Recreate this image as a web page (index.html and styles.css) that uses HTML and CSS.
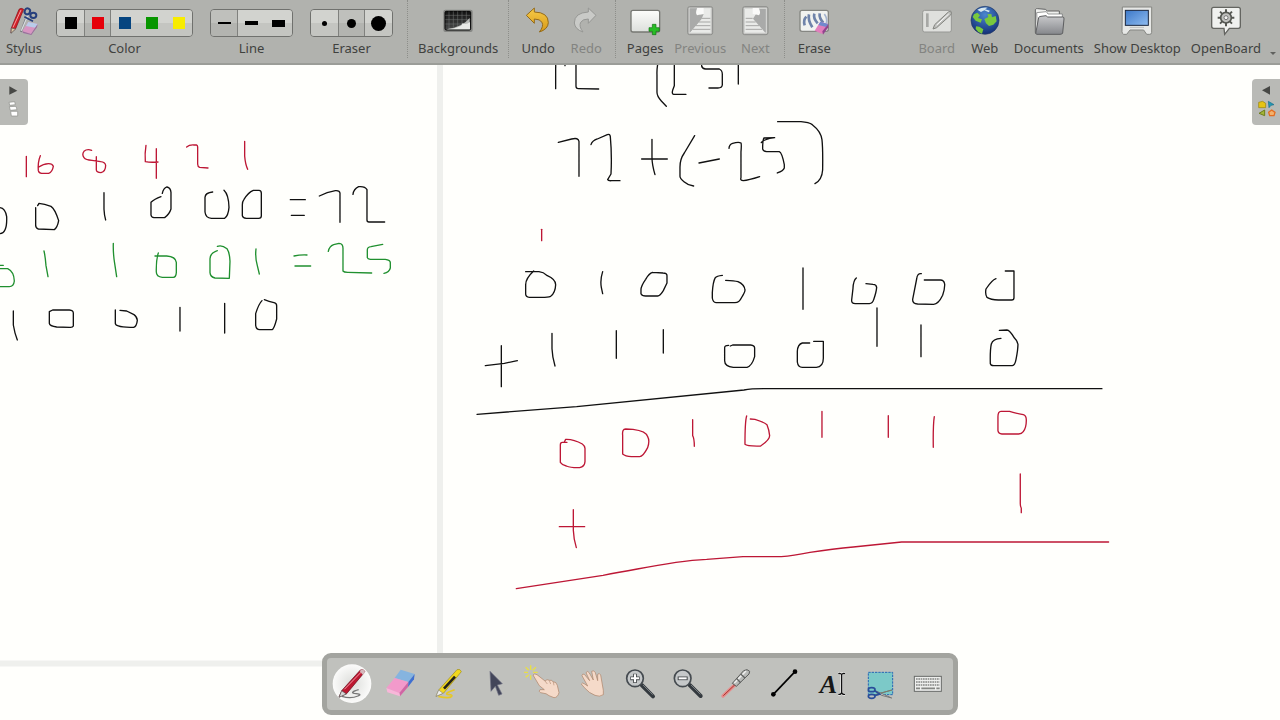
FILE: index.html
```html
<!DOCTYPE html>
<html lang="en">
<head>
<meta charset="utf-8">
<title>OpenBoard</title>
<link rel="stylesheet" href="styles.css">
</head>
<body>
<svg class="defs" aria-hidden="true">
  <defs>
    <linearGradient id="gold" x1="0" y1="0" x2="0" y2="1"><stop offset="0" stop-color="#f6ca48"/><stop offset="1" stop-color="#d89a18"/></linearGradient>
    <linearGradient id="paper" x1="0" y1="0" x2="0" y2="1"><stop offset="0" stop-color="#fdfdfb"/><stop offset="1" stop-color="#dcdfdb"/></linearGradient>
    <linearGradient id="screen" x1="0" y1="0" x2="1" y2="1"><stop offset="0" stop-color="#3c78c8"/><stop offset="1" stop-color="#8fbcf0"/></linearGradient>
    <linearGradient id="folder" x1="0" y1="0" x2="0" y2="1"><stop offset="0" stop-color="#c9cacc"/><stop offset="1" stop-color="#85878b"/></linearGradient>
    <linearGradient id="slate" x1="0" y1="0" x2="0" y2="1"><stop offset="0" stop-color="#111"/><stop offset="1" stop-color="#4a4b4b"/></linearGradient>
    <radialGradient id="sea" cx=".5" cy=".3" r=".7"><stop offset="0" stop-color="#4b86cf"/><stop offset="1" stop-color="#132f76"/></radialGradient>
    <radialGradient id="disc"><stop offset="0" stop-color="#dcddda"/><stop offset="1" stop-color="#fbfbfa"/></radialGradient>
  </defs>
</svg>

<header class="toolbar">
  <button class="tool" type="button">
    <svg class="icon" viewBox="23 15 96 96"><path d="M62 96L76 58" stroke="#777b80" stroke-width="6"/><path d="M63 92L86 38" stroke="#d9dcdf" stroke-width="4"/><path d="M72 50L98 64" stroke="#263f7d" stroke-width="5"/><ellipse cx="81" cy="34" rx="8" ry="9" stroke="#263f7d" stroke-width="6" transform="rotate(25 81 34)"/><ellipse cx="99" cy="46" rx="9" ry="8" stroke="#263f7d" stroke-width="6"/><path d="M34 96L32 99L33 84L56 28Q62 22 70 28L46 86Z" fill="#d51f27" stroke="#7d1118" stroke-width="2"/><path d="M38 82L62 30" stroke="#f3a0a2" stroke-width="3"/><path d="M33 84L46 87L32 100Z" fill="#d8c7a5" stroke="#555" stroke-width="2"/><path d="M84 66L112 72L92 102L66 94Z" fill="#d895c2"/><path d="M84 66L112 72L105 83L77 78Z" fill="#b9cdea"/><path d="M66 94L92 102L112 72L110 82L93 105L68 99Z" fill="#9c6e9e"/></svg>
    <span class="label">Stylus</span>
  </button>
  <div class="tool tool-set" role="group" aria-labelledby="color-label">
    <div class="segments">
      <button class="segment" type="button" aria-label="Black"><i class="swatch black"></i></button>
      <button class="segment" type="button" aria-label="Red" aria-pressed="true"><i class="swatch red"></i></button>
      <button class="segment" type="button" aria-label="Blue"><i class="swatch blue"></i></button>
      <button class="segment" type="button" aria-label="Green"><i class="swatch green"></i></button>
      <button class="segment" type="button" aria-label="Yellow"><i class="swatch yellow"></i></button>
    </div>
    <span class="label" id="color-label">Color</span>
  </div>
  <div class="tool tool-set" role="group" aria-labelledby="line-label">
    <div class="segments">
      <button class="segment" type="button" aria-label="Fine line" aria-pressed="true"><i class="line fine"></i></button>
      <button class="segment" type="button" aria-label="Medium line"><i class="line medium"></i></button>
      <button class="segment" type="button" aria-label="Strong line"><i class="line strong"></i></button>
    </div>
    <span class="label" id="line-label">Line</span>
  </div>
  <div class="tool tool-set" role="group" aria-labelledby="eraser-label">
    <div class="segments">
      <button class="segment" type="button" aria-label="Small eraser"><i class="dot small"></i></button>
      <button class="segment" type="button" aria-label="Medium eraser" aria-pressed="true"><i class="dot middle"></i></button>
      <button class="segment" type="button" aria-label="Large eraser"><i class="dot large"></i></button>
    </div>
    <span class="label" id="eraser-label">Eraser</span>
  </div>
  <span class="divider"></span>
  <button class="tool" type="button">
    <svg class="icon" viewBox="129 15 96 96"><rect x="133" y="29" width="88" height="67" rx="6" fill="#858683"/><rect x="138" y="34" width="77" height="56" rx="4" fill="url(#slate)" stroke="#050505" stroke-width="3"/><path d="M150 34V88M163 34V84M176 34V80M189 34V75M202 34V68M139 46H214M139 59H214M139 72H190" stroke="#777a79" stroke-width="1.5"/><path d="M142 88Q190 82 212 54V88Z" fill="#b9bbb9"/><path d="M142 88Q190 84 190 70Q202 75 213 66V88Z" fill="#e8e9e7"/></svg>
    <span class="label">Backgrounds</span>
  </button>
  <span class="divider"></span>
  <button class="tool" type="button">
    <svg class="icon" viewBox="368 15 96 96"><path d="M381 46L405 24V36Q447 37 447 68Q446 88 420 96Q434 79 428 67Q422 57 405 57V70Z" fill="url(#gold)" stroke="#926a1c" stroke-width="3" stroke-linejoin="round"/></svg>
    <span class="label">Undo</span>
  </button>
  <button class="tool" type="button" disabled>
    <svg class="icon" viewBox="512 15 96 96"><path d="M590 46L567 24V36Q525 38 525 69Q527 88 551 96Q538 79 544 67Q550 57 567 57V70Z" fill="#c9cac7" stroke="#969794" stroke-width="3" stroke-linejoin="round"/></svg>
    <span class="label">Redo</span>
  </button>
  <span class="divider"></span>
  <button class="tool" type="button">
    <svg class="icon" viewBox="688 15 96 96"><rect x="694" y="31" width="86" height="65" rx="6" fill="url(#paper)" stroke="#777873" stroke-width="4"/><path d="M758 73H769V83H779V94H769V104H758V94H748V83H758Z" fill="#27bd25" stroke="#116f12" stroke-width="2"/></svg>
    <span class="label">Pages</span>
  </button>
  <button class="tool" type="button" disabled>
    <svg class="icon" viewBox="855 15 96 96"><rect x="866" y="20" width="75" height="84" rx="6" fill="#b2b3b0" stroke="#8e8f8c" stroke-width="3"/><rect x="871" y="25" width="65" height="74" fill="#b5b6b4" stroke="#d9dad8" stroke-width="3"/><path d="M893 25H935V98H872L908 56Z" fill="#e9eae8"/><path d="M908 56L872 98V25H894Q888 38 895 46Q901 43 914 42Z" fill="#a9aaa9"/><path d="M895 24Q888 38 894 46Q902 43 914 42V24Z" fill="#fafaf9"/><path d="M909 55H934M899 66H934M890 77H934M881 88H934" stroke="#a6a7a5" stroke-width="3"/></svg>
    <span class="label">Previous</span>
  </button>
  <button class="tool" type="button" disabled>
    <svg class="icon" viewBox="1020 15 96 96"><rect x="1031" y="20" width="76" height="84" rx="6" fill="#b2b3b0" stroke="#8e8f8c" stroke-width="3"/><rect x="1036" y="25" width="66" height="74" fill="#a9aaa9" stroke="#d9dad8" stroke-width="3"/><path d="M1038 26H1081L1062 56L1099 98H1038Z" fill="#e9eae8"/><path d="M1061 24H1079Q1087 38 1080 46Q1072 43 1061 42Z" fill="#fafaf9"/><path d="M1040 55H1061M1040 66H1070M1040 77H1080M1040 88H1089" stroke="#a6a7a5" stroke-width="3"/></svg>
    <span class="label">Next</span>
  </button>
  <span class="divider"></span>
  <button class="tool" type="button">
    <svg class="icon" viewBox="1197 15 96 96"><rect x="1203" y="31" width="85" height="63" rx="6" fill="#f1f2f0" stroke="#858682" stroke-width="4"/><path d="M1217 76Q1212 60 1222 50M1240 82Q1226 60 1230 43M1256 70Q1242 55 1246 41M1273 68Q1260 54 1262 40" stroke="#6f83aa" stroke-width="8"/><path d="M1276 42Q1286 56 1282 70" stroke="#a5b4cf" stroke-width="5"/><path d="M1264 65L1288 72L1270 102L1247 92Z" fill="#e27fbd"/><path d="M1264 65L1288 72L1282 81L1258 75Z" fill="#7189ce"/><path d="M1288 72V82L1272 104L1270 94Z" fill="#92448e"/></svg>
    <span class="label">Erase</span>
  </button>
  <nav class="modes" aria-label="Modes">
    <button class="tool" type="button" disabled>
      <svg class="icon" viewBox="207 15 96 96"><rect x="212" y="31" width="86" height="65" rx="6" fill="#dfe0dd" stroke="#969794" stroke-width="3"/><path d="M226 40V81" stroke="#a7a8a5" stroke-width="8"/><path d="M243 87L248 74L289 36Q294 32 298 37Q299 41 295 46L254 83Z" fill="#c0c1be" stroke="#83847f" stroke-width="3"/><path d="M254 75L290 42" stroke="#fff" stroke-width="3"/></svg>
      <span class="label">Board</span>
    </button>
    <button class="tool" type="button">
      <svg class="icon" viewBox="351 15 96 96"><circle cx="399" cy="61" r="42" fill="url(#sea)" stroke="#263d67" stroke-width="2"/><path d="M366 43L376 38L384 46L378 54L390 58L386 68L371 62L362 51ZM397 57L409 51L406 43L418 42L420 52L431 48L434 64L424 74L411 78L402 70ZM372 79L382 80L394 88L390 101Q376 96 371 87Z" fill="#79c83d"/><path d="M376 29Q390 21 407 23L399 28L414 32L410 37L397 31L387 36Z" fill="#d4e6ef"/></svg>
      <span class="label">Web</span>
    </button>
    <button class="tool" type="button">
      <svg class="icon" viewBox="543 15 96 96"><path d="M550 98V29Q552 25 557 26L580 28L586 33H622V95Z" fill="#eeefed" stroke="#626363" stroke-width="3"/><path d="M554 38L583 35L588 42H631V90H557Z" fill="#fff" stroke="#686969" stroke-width="2"/><path d="M551 101L560 53Q561 49 567 49L582 47L587 51H632Q637 51 636 57L632 99Q631 103 624 103H555Z" fill="url(#folder)" stroke="#5d5e60" stroke-width="3"/></svg>
      <span class="label">Documents</span>
    </button>
    <button class="tool" type="button">
      <svg class="icon" viewBox="812 15 96 96"><path d="M816 21H904V97Q904 103 898 103H889L880 90H839L829 103H820Q815 101 815 95Z" fill="#e7e8e6" stroke="#858682" stroke-width="3"/><rect x="825" y="31" width="69" height="45" fill="url(#screen)" stroke="#18243d" stroke-width="3"/><path d="M838 82H881" stroke="#bfc0bd" stroke-width="3"/></svg>
      <span class="label">Show Desktop</span>
    </button>
    <button class="tool" type="button">
      <svg class="icon" viewBox="1082 15 96 96"><path d="M1093 22H1167Q1173 22 1173 28V79Q1173 85 1167 85H1140L1126 103L1124 85H1093Q1087 85 1087 79V28Q1087 22 1093 22Z" fill="#f0f1ef" stroke="#646561" stroke-width="4"/><path d="M1130 28V79M1105 53H1155M1112 35L1148 71M1112 71L1148 35" stroke="#555752" stroke-width="6"/><circle cx="1130" cy="53" r="16" fill="#c0c1be" stroke="#555752" stroke-width="5"/><circle cx="1130" cy="53" r="6" fill="#f3f3f2" stroke="#777" stroke-width="3"/></svg>
      <span class="label">OpenBoard</span>
    </button>
    <button class="more" type="button" aria-label="More tools"><i></i></button>
  </nav>
</header>

<main class="board">
  <svg class="canvas" viewBox="0 65 1280 655" preserveAspectRatio="xMinYMin slice" role="img" aria-label="Binary working for 72 + (-25)">
    <path class="page-edge" d="M440 60V664M443 663.500H0"/>
    <g class="ink" transform="translate(0 130) scale(.3333)">
      <path class="red" d="M79 79V140M121 77Q113 96 115 122Q117 130 125 130H146Q157 126 160 109Q157 101 146 101Q130 101 115 112M275 61Q261 56 252 64Q245 73 252 83Q257 90 276 91L302 95Q315 96 317 106Q317 125 303 128Q289 127 289 119V80M438 46Q434 70 436 95Q452 98 474 96M469 56V145M560 51Q568 44 582 45H590Q594 47 593 57V102Q593 110 599 112L624 114"/>
      <path d="M0 233Q16 235 20 260Q22 310 0 311M107 233V286Q107 295 115 297L163 299Q172 293 176 272Q165 237 153 229Q133 222 117 220L113 227M312 188V238Q313 258 317 270M483 200Q463 207 453 217V255Q454 262 462 263H494Q508 253 513 237V187Q512 174 501 171Q490 175 487 190M40 543V585Q44 610 52 630M158 540H208Q221 541 220 551V588Q218 593 209 592L170 591Q149 588 148 580V545ZM346 540V579Q345 585 355 588Q368 593 401 592Q410 589 412 571Q411 560 402 554L380 543L360 541M540 532V603"/>
      <path class="green" d="M0 406H10M0 416H23Q42 425 43 453Q41 470 28 470H0M132 363Q136 380 138 407L144 440M340 340Q339 370 344 400L350 440M465 378H500Q527 380 529 397V428Q528 442 520 442H487Q469 440 469 426Q468 391 475 369"/>
    </g>
    <g class="ink" transform="translate(190 130) scale(.3333)">
      <path class="red" d="M164 34V78Q166 103 173 118"/>
      <path d="M68 186Q46 188 45 202V246Q47 264 64 265H104Q115 257 117 232Q116 194 102 181M157 224Q157 215 162 208Q175 187 190 181H207Q214 181 214 190V258Q214 265 206 265H169Q158 264 157 257ZM301 209H346M304 256H343M388 198Q411 186 436 182Q449 181 450 189V277M489 193Q491 177 506 170Q525 168 531 179V270Q531 276 537 276H584M104 520V609M216 512Q206 522 197 551V586Q199 599 209 599H246Q252 598 260 567V527Q260 520 252 518Q237 515 223 509"/>
      <path class="green" d="M82 362Q60 370 60 386V428Q61 441 75 444L118 445L120 394Q119 368 111 356Q96 344 82 349M198 357Q195 382 202 407L208 432M312 378Q331 374 351 375M315 408H362M415 364Q418 349 431 344L447 340Q460 340 459 358V423Q462 427 473 427L545 429M578 343L543 350Q532 351 532 360V383Q533 387 541 388H586Q602 390 601 399V414Q598 427 582 430"/>
    </g>
    <g class="ink" transform="translate(460 60) scale(.3333)">
      <path d="M284 0Q288 8 287 26V86M315 0V17M348 0V79Q348 86 355 86L416 87M596 0Q590 22 591 45V97Q591 109 604 123L619 139M643 0V77L638 91Q635 102 641 103H678M725 0V18Q727 26 737 27H778Q788 31 787 46V75Q786 84 774 84H747M835 0V72"/>
      <path d="M295 247L335 237Q355 232 357 244V349M393 254Q397 242 412 237L442 224Q450 221 451 230Q456 284 453 342L443 359Q445 363 455 362H480M545 297H622M576 238V292Q576 314 585 344M704 227L673 279Q660 297 660 321V348Q659 355 672 365Q683 375 701 378M717 309L778 297M807 265Q808 253 818 250Q836 245 843 249Q845 252 843 276V353Q840 362 850 362Q865 361 899 350M904 248Q909 238 944 233L912 234Q908 240 908 267Q909 273 920 275H958Q966 278 973 314V324Q970 333 952 339M953 185H1023Q1047 187 1057 194Q1083 214 1086 239Q1089 265 1088 330Q1086 360 1065 371"/>
      <path class="red" d="M245 508V542"/>
    </g>
    <g class="ink" transform="translate(465 250) scale(.3333)">
      <path d="M182 65H222Q235 66 247 77Q272 88 272 104Q271 128 257 139Q249 142 230 142H193Q182 141 182 132V104Q182 85 206 63M413 65Q405 90 409 112L413 131M563 67Q552 70 542 88Q528 108 528 119V131Q531 138 542 138H577Q585 139 595 122L606 99V79Q607 69 594 69L563 67M772 76Q755 78 751 83Q744 95 742 128V144Q744 157 753 158H810Q823 158 829 144Q841 125 840 120Q838 103 819 95Q809 92 782 91M261 250V296Q262 321 270 348M454 242V325M595 239V309M109 287V410M61 347L118 340L157 332M796 288L803 285H857Q869 287 869 294V320Q861 348 846 352H805Q779 349 779 332V295Q778 286 791 286"/>
      <path d="M36 493L335 470L837 420Q858 416 900 416H1911"/>
    </g>
    <g class="ink" transform="translate(780 250) scale(.3333)">
      <path d="M69 54V178M229 84Q220 91 219 115L215 150Q214 161 226 161H268Q278 160 281 149Q289 126 290 112Q289 103 279 103L258 101M424 71Q412 69 410 87L398 148Q397 161 413 162L461 163Q475 163 488 136Q495 115 494 102Q492 90 481 90H433M648 86Q636 90 618 117Q615 133 621 142Q632 149 655 150H695Q702 150 702 143V63H676M291 174V289M423 225V320M89 279H67Q53 283 52 304V336Q54 352 67 352H109Q130 351 130 325V274H101M663 265Q639 266 634 282Q630 300 631 341Q632 347 641 347H697Q705 346 708 329Q714 299 714 283Q712 272 704 265Q689 240 681 240L658 241"/>
    </g>
    <g class="ink red" transform="translate(500 400) scale(.3333)">
      <path d="M201 127H187Q181 127 181 135V187Q187 196 199 198Q213 204 239 203Q254 200 255 185V145Q254 137 247 132Q221 117 197 118L193 126M368 162V106Q366 87 377 87L399 88Q439 93 443 110Q450 122 443 143Q429 170 419 170H394Q376 169 368 162M578 59V107Q583 115 583 139M740 48Q735 64 735 133Q741 139 782 138Q809 119 809 107Q808 91 801 74Q791 66 765 58L751 57M966 34V112M178 380H254M220 329V391Q221 418 229 443"/>
      <path d="M49 566L309 526Q355 517 412 507Q540 482 620 478L729 470H844Q879 467 930 457Q1000 447 1060 441L1205 426H1826"/>
      <path d="M1165 47V112M1303 50Q1299 75 1300 142M1561 222V311Q1561 319 1564 325V338M1503 34H1529Q1540 38 1570 44Q1580 47 1579 63Q1579 83 1570 95Q1565 102 1556 102H1506Q1495 101 1494 92V50Q1494 34 1503 34Z"/>
    </g>
  </svg>

  <button class="drawer drawer-left" type="button" aria-label="Show pages panel">
    <svg viewBox="0 237 84 138"><path d="M28 259L52 272L28 284Z" fill="#474845"/><path d="M27 307L44 305L46 314L29 316ZM28 320L48 319L51 329L31 331ZM32 334H53V348H34Z" fill="#fff" stroke="#8b8c88" stroke-width="2"/></svg>
  </button>
  <button class="drawer drawer-right" type="button" aria-label="Show library">
    <svg viewBox="1206 237 84 138"><path d="M1260 258V284L1236 271Z" fill="#474845"/><path d="M1226 307L1238 304L1247 310V323H1226Z" fill="#e5c414" stroke="#93810c" stroke-width="2"/><path d="M1255 304L1272 314L1263 316L1257 323Z" fill="#2598b3" stroke="#176e8b" stroke-width="2"/><path d="M1244 330V347L1227 340Z" fill="#a4b637" stroke="#6d7d1b" stroke-width="3"/><path d="M1265 330L1275 337L1272 347H1259L1256 337Z" fill="#f3b16c" stroke="#e36d20" stroke-width="4"/></svg>
  </button>

  <div class="palette" role="toolbar" aria-label="Drawing tools">
    <button type="button" aria-label="Pen" aria-pressed="true"><svg viewBox="54 57 120 120"><circle cx="114" cy="116" r="58" fill="url(#disc)"/><path d="M84 154Q110 162 132 153Q147 147 121 145Q106 142 134 134" stroke="#777" stroke-width="4"/><path d="M75 156L84 136L139 75Q148 71 153 80L98 146Z" fill="#bd1730" stroke="#62101c" stroke-width="2"/><path d="M91 133L143 80" stroke="#f598a5" stroke-width="3"/><path d="M75 157L83 137L97 147Z" fill="#d6d6d6" stroke="#555" stroke-width="2"/><path d="M137 78L144 73Q153 75 153 83L146 89Z" fill="#d4b9bd"/></svg></button>
    <button type="button" aria-label="Eraser"><svg viewBox="198 57 120 120"><path d="M260 74L302 87L283 111L242 99Z" fill="#86b4df"/><path d="M242 99L283 111L256 145L217 129Z" fill="#f29acb"/><path d="M302 87L300 103L282 126L283 111Z" fill="#3f70d1"/><path d="M283 111L282 126L258 154L256 144Z" fill="#d165a4"/><path d="M217 129L256 144L258 154L220 142Z" fill="#f8b6d9"/></svg></button>
    <button type="button" aria-label="Highlighter"><svg viewBox="342 57 120 120"><path d="M373 154Q406 162 413 154Q417 149 399 148Q392 144 422 134" stroke="#e6c826" stroke-width="5"/><path d="M366 154L375 134L429 74Q438 70 442 80L389 144Z" fill="#f2d81e" stroke="#9b8b1c" stroke-width="2"/><path d="M390 131L423 95" stroke="#24231b" stroke-width="8"/><path d="M366 154L374 135L387 145Z" fill="#eee" stroke="#888" stroke-width="2"/></svg></button>
    <button type="button" aria-label="Select"><svg viewBox="486 57 120 120"><path d="M528 79L565 116L550 120L564 147L554 151L544 124L531 139Z" fill="#43465a" stroke="#707184" stroke-width="2"/></svg></button>
    <button type="button" aria-label="Interact"><svg viewBox="630 57 120 120"><path d="M650 61V75M650 91V104M629 82H642M657 82H671M635 67L644 76M666 67L656 76M635 97L644 89" stroke="#e8df47" stroke-width="4"/><path d="M657 90Q661 84 669 89L693 108Q699 101 706 106Q713 104 717 110Q727 110 730 121L735 143Q731 158 720 158L705 152Q700 145 680 143Q672 139 678 134L691 134L676 122Z" fill="#f5dac9" stroke="#aa8065" stroke-width="2"/><path d="M693 108L700 117M706 107L710 117M718 111L720 121" stroke="#b58f75" stroke-width="2"/></svg></button>
    <button type="button" aria-label="Scroll page"><svg viewBox="771 57 120 120"><path d="M823 142Q805 126 799 117Q801 111 809 117L818 123L801 92Q802 85 808 88L824 107L813 83Q818 75 823 84L835 105L830 79Q837 74 841 83L848 107L848 88Q853 82 857 90L865 136V149Q854 157 840 151Z" fill="#f5dac9" stroke="#aa8065" stroke-width="2" stroke-linejoin="round"/></svg></button>
    <button type="button" aria-label="Zoom in"><svg viewBox="-45 57 120 120"><path d="M20 120L54 154" stroke="#343a3f" stroke-width="12" stroke-linecap="round"/><path d="M24 120L53 149" stroke="#777d80" stroke-width="3"/><circle cx="0" cy="100" r="25" fill="#c5c8c9" stroke="#454b50" stroke-width="5"/><path d="M-14 100H14M0 86V114" stroke="#44484b" stroke-width="11"/><path d="M-12 100H12M0 88V112" stroke="#fff" stroke-width="6"/></svg></button>
    <button type="button" aria-label="Zoom out"><svg viewBox="99 57 120 120"><path d="M164 120L197 153" stroke="#343a3f" stroke-width="12" stroke-linecap="round"/><path d="M168 120L196 148" stroke="#777d80" stroke-width="3"/><circle cx="143" cy="100" r="25" fill="#c5c8c9" stroke="#454b50" stroke-width="5"/><path d="M128 100H158" stroke="#44484b" stroke-width="11"/><path d="M131 100H155" stroke="#fff" stroke-width="6"/></svg></button>
    <button type="button" aria-label="Laser pointer"><svg viewBox="243 57 120 120"><path d="M264 153L303 116" stroke="#e78989" stroke-width="10" stroke-linecap="round"/><path d="M265 152L303 116" stroke="#a4372f" stroke-width="3"/><path d="M292 115L326 77Q337 70 344 79L342 87L304 124Z" fill="#b9bbb9" stroke="#595b59" stroke-width="3"/><path d="M298 114L333 78" stroke="#f2f2f1" stroke-width="4"/><path d="M304 100L317 113M317 87L330 99" stroke="#626462" stroke-width="4"/></svg></button>
    <button type="button" aria-label="Draw line"><svg viewBox="384 57 120 120"><path d="M412 148L477 80" stroke="#000" stroke-width="5"/><circle cx="412" cy="148" r="7" fill="#000"/><circle cx="477" cy="80" r="7" fill="#000"/></svg></button>
    <button type="button" aria-label="Write text"><svg viewBox="528 57 120 120"><text class="text-glyph" x="551" y="145">A</text><path d="M607 86Q617 84 617 91V141Q617 149 607 148M627 86Q617 84 617 91M617 141Q617 149 627 148" stroke="#eee" stroke-width="8"/><path d="M607 86Q617 84 617 91V141Q617 149 607 148M627 86Q617 84 617 91M617 141Q617 149 627 148" stroke="#111" stroke-width="4"/></svg></button>
    <button type="button" aria-label="Capture area"><svg viewBox="672 57 120 120"><rect x="697" y="82" width="73" height="67" fill="#7cc9c8" stroke="#2466b5" stroke-width="3" stroke-dasharray="7 3"/><path d="M718 149L768 135L739 143Z" fill="#eee" stroke="#797b6e" stroke-width="3"/><path d="M718 137L767 159L737 151Z" fill="#ddd" stroke="#777" stroke-width="3"/><ellipse cx="707" cy="134" rx="10" ry="6" stroke="#294d99" stroke-width="5"/><ellipse cx="707" cy="154" rx="10" ry="6" stroke="#294d99" stroke-width="5"/><path d="M715 137L731 147L716 152" stroke="#294d99" stroke-width="5"/></svg></button>
    <button type="button" aria-label="Virtual keyboard"><svg viewBox="816 57 120 120"><rect x="835" y="94" width="81" height="45" fill="#eeefed" stroke="#686a67" stroke-width="3"/><path d="M840 102H911M840 111H911M840 120H911" stroke="#858784" stroke-width="5" stroke-dasharray="5 2"/><path d="M840 130H852M856 130H897M901 130H911" stroke="#858784" stroke-width="5"/></svg></button>
  </div>
</main>
</body>
</html>
```

FILE: styles.css
```css
* { box-sizing: border-box; }

body {
  display: flex;
  flex-direction: column;
  min-height: 100vh;
  margin: 0;
  overflow: hidden;
  background: #fffffc;
  color: #40413e;
  font: 13px/20px "Noto Sans", sans-serif;
}

button {
  margin: 0;
  padding: 0;
  border: 0;
  background: none;
  color: inherit;
  font: inherit;
}

svg { display: block; fill: none; }
.defs { position: absolute; width: 0; height: 0; }

.toolbar {
  display: flex;
  flex: none;
  align-items: stretch;
  padding-bottom: 5px;
  border-bottom: 2px solid #9b9d98;
  background: #b1b2ae;
}

.tool {
  display: flex;
  flex: none;
  flex-direction: column;
  align-items: center;
  min-width: 48px;
  padding: 5px 5px 0;
}

.tool:disabled { color: #838481; }
.tool-set { margin-right: 1px; padding: 5px 8px 0; }
.icon { width: 32px; height: 32px; }
.label { margin-top: 1px; white-space: nowrap; }

.segments {
  display: flex;
  height: 28px;
  margin: 4px 0 0;
  overflow: hidden;
  border: 1px solid #70716e;
  border-radius: 4px;
}

.segment {
  display: flex;
  align-items: center;
  justify-content: center;
  width: 27px;
  background: linear-gradient(#d2d3cf 50%, #c4c5c1 50%);
}

.segment[aria-pressed="true"] { background: linear-gradient(#bfc0bc 50%, #b3b4b0 50%); }
.segment[aria-pressed="true"]:not(:first-child) { border-left: 1px solid #80817e; }
.segment[aria-pressed="true"]:not(:last-child) { border-right: 1px solid #80817e; }
.swatch { width: 12px; height: 12px; }
.black { background: #000; }
.swatch.red { background: #e6000a; }
.blue { background: #064580; }
.swatch.green { background: #089600; }
.yellow { background: #f8ec00; }
.line { width: 13px; background: #000; }
.fine { height: 2px; }
.medium { height: 4px; }
.strong { height: 7px; }
.dot { border-radius: 50%; background: #000; }
.small { width: 5px; height: 5px; }
.middle { width: 9px; height: 9px; }
.large { width: 15px; height: 15px; }

.divider {
  flex: none;
  width: 1px;
  margin: 0 5px;
  border-left: 1px dotted #8d8e8a;
}

.modes { display: flex; margin-left: auto; }

.more {
  display: flex;
  align-items: flex-end;
  justify-content: center;
  width: 14px;
  padding-bottom: 3px;
}

.more i {
  border: 3px solid transparent;
  border-top-color: #60615e;
  border-bottom: 0;
}

.board {
  position: relative;
  flex: 1;
  min-height: 0;
  overflow: hidden;
}

.canvas { position: absolute; width: 100%; height: 100%; }
.page-edge { stroke: #eff0ed; stroke-width: 6; }

.ink {
  stroke: #111;
  stroke-width: 4;
  stroke-linecap: round;
  stroke-linejoin: round;
}

.ink.red, .ink .red { stroke: #bd1735; }
.ink .green { stroke: #20902f; }

.drawer {
  position: absolute;
  top: 14px;
  width: 28px;
  background: #b9bab6;
}

.drawer-left { left: 0; border-radius: 0 4px 4px 0; }
.drawer-right { right: 0; border-radius: 4px 0 0 4px; }

.palette {
  position: absolute;
  bottom: 5px;
  left: 50%;
  display: flex;
  padding: 0 1px;
  border: 5px solid #a3a49f;
  border-radius: 9px;
  background: #c0c1bd;
  transform: translateX(-50%);
}

.palette button {
  display: flex;
  align-items: center;
  justify-content: center;
  width: 48px;
  height: 52px;
}

.palette svg { width: 40px; height: 40px; }

.text-glyph {
  fill: #171717;
  font: italic bold 78px "Liberation Serif", serif;
}
```
